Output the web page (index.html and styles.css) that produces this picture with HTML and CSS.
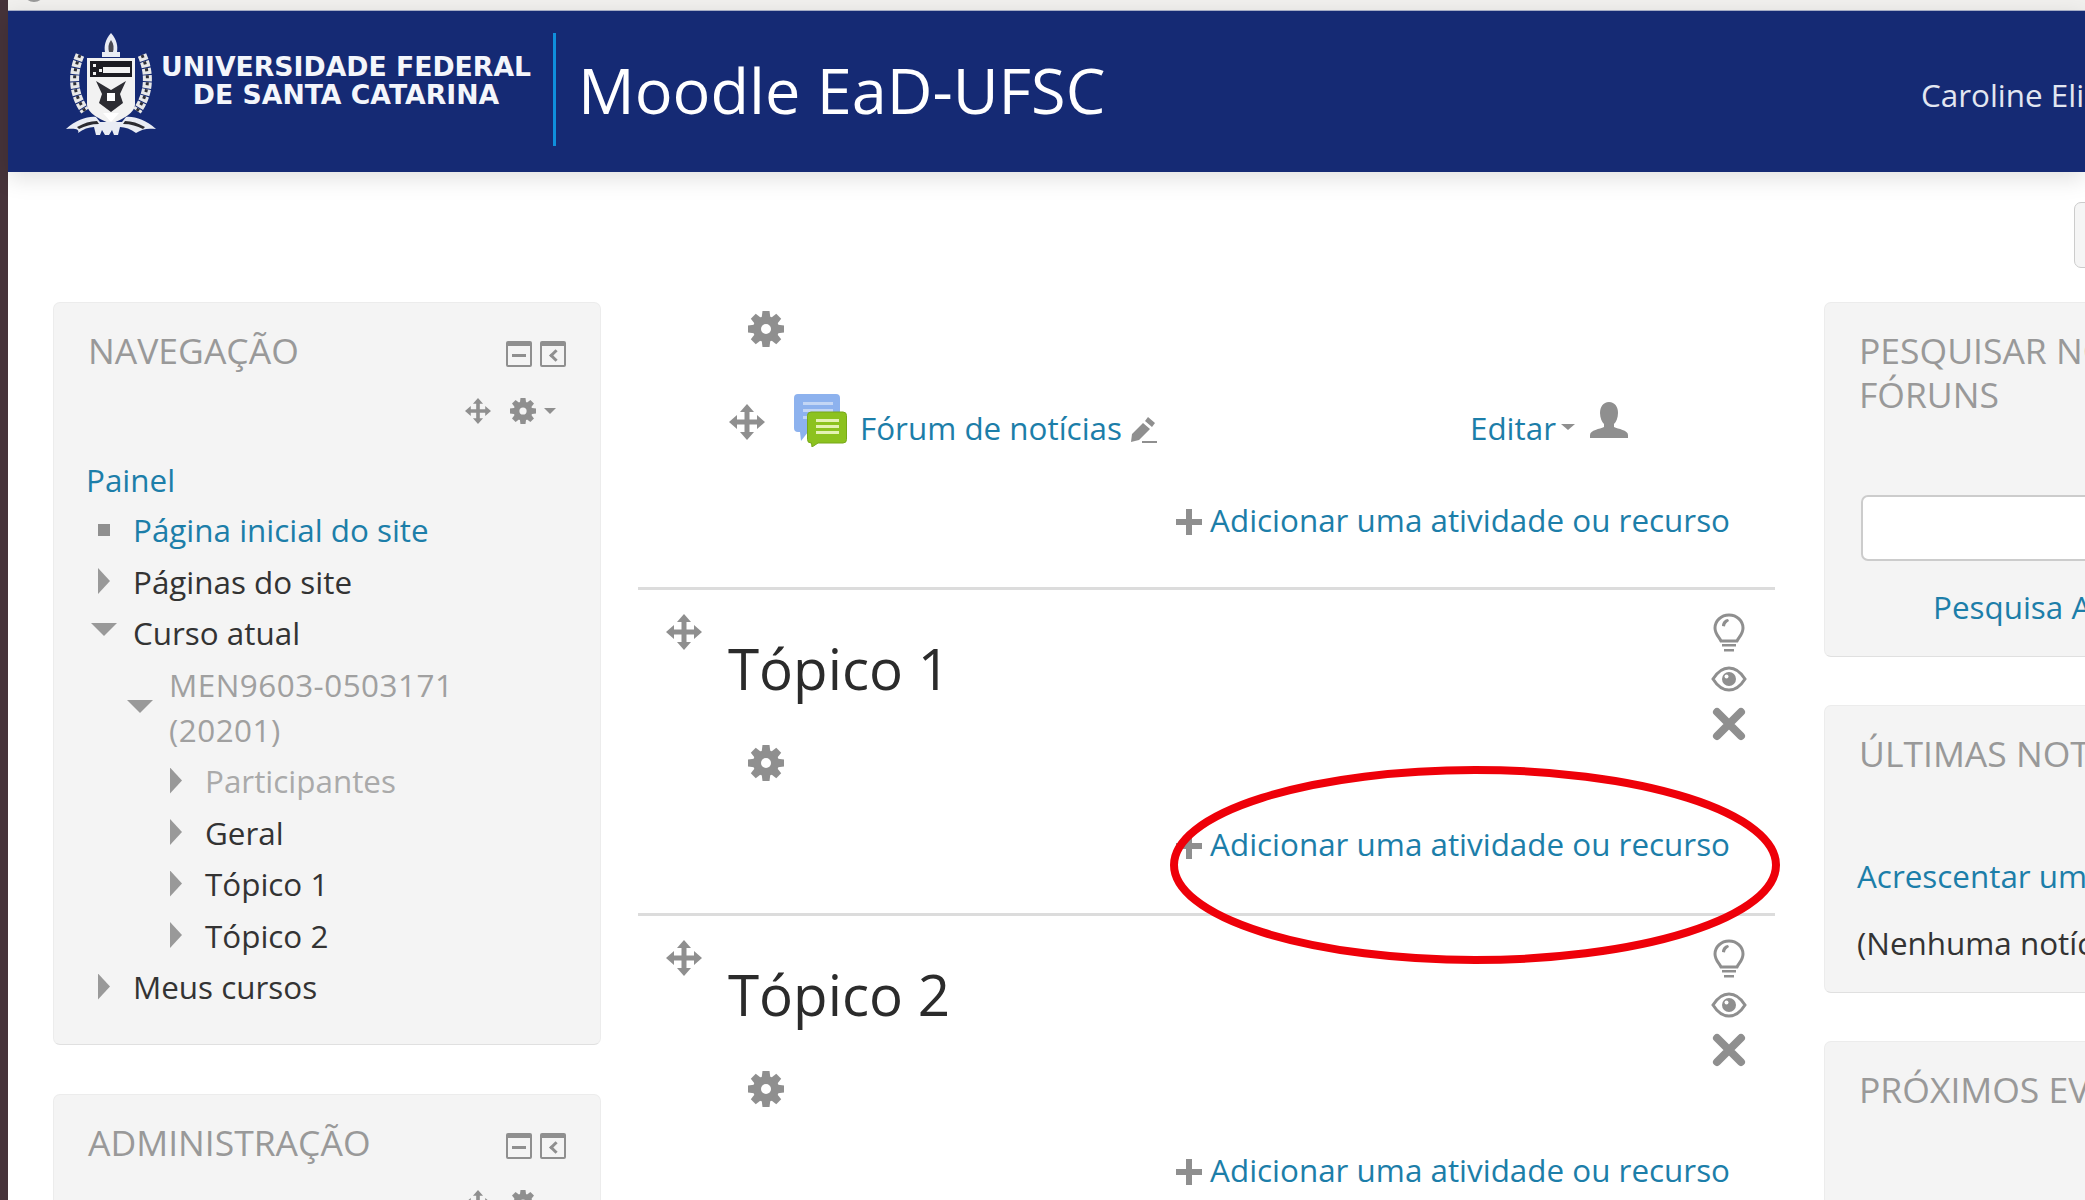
FILE: index.html
```html
<!DOCTYPE html>
<html lang="pt-BR">
<head>
<meta charset="utf-8">
<title>Moodle EaD-UFSC</title>
<link rel="stylesheet" href="styles.css">
</head>
<body>
<svg class="defs" width="0" height="0" aria-hidden="true">
  <symbol id="gear" viewBox="0 0 36 36">
    <g fill="#8f8f8f">
      <circle cx="18" cy="18" r="13"/>
      <path id="tooth" d="M14.500 0h7l1 8h-9z"/>
      <path d="M14.500 0h7l1 8h-9z" transform="rotate(45 18 18)"/>
      <path d="M14.500 0h7l1 8h-9z" transform="rotate(90 18 18)"/>
      <path d="M14.500 0h7l1 8h-9z" transform="rotate(135 18 18)"/>
      <path d="M14.500 0h7l1 8h-9z" transform="rotate(180 18 18)"/>
      <path d="M14.500 0h7l1 8h-9z" transform="rotate(225 18 18)"/>
      <path d="M14.500 0h7l1 8h-9z" transform="rotate(270 18 18)"/>
      <path d="M14.500 0h7l1 8h-9z" transform="rotate(315 18 18)"/>
    </g>
    <circle cx="18" cy="18" r="5" fill="var(--hole, #fff)"/>
  </symbol>
  <symbol id="move" viewBox="0 0 36 36">
    <path fill="#8f8f8f" d="M18 0l7 8h-4.500v7.500H28V11l8 7-8 7v-4.500h-7.500V28H25l-7 8-7-8h4.500v-7.500H8V25l-8-7 8-7v4.500h7.500V8H11z"/>
  </symbol>
  <symbol id="plus" viewBox="0 0 26 26">
    <path fill="#8f8f8f" d="M10 0h6v10h10v6H16v10h-6V16H0v-6h10z"/>
  </symbol>
  <symbol id="bulb" viewBox="0 0 32 40">
    <path fill="none" stroke="#8f8f8f" stroke-width="3" d="M16 2c8 0 14 6 14 13 0 6-4 9-6 13H8C6 24 2 21 2 15 2 8 8 2 16 2z"/>
    <path fill="#8f8f8f" d="M9 31h14v2.500H9zM11 36h10v2.500H11zM9 13c0-4 3-7 6-7l1 2c-2 1-4 3-4 5.500z"/>
  </symbol>
  <symbol id="eye" viewBox="0 0 36 26">
    <path fill="none" stroke="#8f8f8f" stroke-width="3" d="M2 13C7 5 12 2 18 2s11 3 16 11c-5 8-10 11-16 11S7 21 2 13z"/>
    <circle cx="18" cy="13" r="7" fill="#8f8f8f"/>
    <circle cx="15.500" cy="10.500" r="2" fill="#fff"/>
  </symbol>
  <symbol id="close" viewBox="0 0 36 36">
    <path fill="none" stroke="#8f8f8f" stroke-width="8" stroke-linecap="round" d="M6 6l24 24M30 6L6 30"/>
  </symbol>
</svg>

<div class="edge"></div>
<div class="window">
  <div class="browser-strip"><span class="browser-dot"></span></div>
  <header class="site-header">
    <div class="logo">
      <svg class="crest" viewBox="0 0 92 104" aria-hidden="true">
        <path fill="#e9ecf4" d="M46 0c-6 7-7 13-6 19h-3v5h18v-5h-3c1-6 0-12-6-19z"/>
        <path fill="#4a4a52" d="M46 7c-3 4-3 8-2 12h4c1-4 1-8-2-12z"/>
        <path fill="#f2f2f2" d="M22 25h48v46c0 9-12 15-24 20-12-5-24-11-24-20z"/>
        <path fill="#1c1c22" d="M25 28h42v16H25z"/>
        <path fill="#f2f2f2" d="M38 34h27v6H38zM28 31h3v3h-3zM34 36h3v3h-3zM28 39h3v3h-3z"/>
        <path fill="#2d2d33" d="M31 48l15 9 15-9-6 13 3 9-12 9-12-9 3-9z"/>
        <path fill="#fff" d="M42 60h8v8h-8zM38 80h16l-8 9z"/>
        <g fill="none" stroke="#e8e8e8" stroke-width="9" stroke-dasharray="6 1">
          <path d="M15 22c-7 16-9 36 5 56"/>
          <path d="M77 22c7 16 9 36-5 56"/>
        </g>
        <g fill="none" stroke="#2f2f36" stroke-width="3" stroke-dasharray="3 4">
          <path d="M15 22c-7 16-9 36 5 56"/>
          <path d="M77 22c7 16 9 36-5 56"/>
        </g>
        <path fill="#e9ecf4" d="M1 96c10-9 22-13 30-12l4 5h22l4-5c8-1 20 3 30 12-9-1-14 0-20 4-5-4-11-6-16-6l-2 8h-4l-2-5-3 5h-4l-3-5-2 5h-4l-2-8c-5 0-11 2-16 6C15 96 10 95 1 96z"/>
        <path fill="#2b2b31" d="M12 94c7-4 13-6 20-6l2 3c-8 0-14 2-20 5zM80 94c-7-4-13-6-20-6l-2 3c8 0 14 2 20 5z"/>
      </svg>
      <div class="logo-text"><span>UNIVERSIDADE FEDERAL</span><span>DE SANTA CATARINA</span></div>
    </div>
    <h1 class="site-name">Moodle EaD-UFSC</h1>
    <div class="user-name">Caroline Elisa da Silva</div>
  </header>

  <div class="page-tools"><button class="page-button" type="button"></button></div>

  <div class="columns">
    <aside class="side-left">
      <section class="block">
        <div class="block-head">
          <h2 class="block-title">NAVEGAÇÃO</h2>
          <div class="win-icons">
            <span class="win-icon"><i class="win-minus"></i></span>
            <span class="win-icon"><i class="win-chev"></i></span>
          </div>
        </div>
        <div class="block-tools">
          <svg class="tool-icon"><use href="#move"/></svg>
          <svg class="tool-icon tool-gear"><use href="#gear"/></svg>
          <i class="caret"></i>
        </div>
        <a class="link tree-root" href="#">Painel</a>
        <ul class="tree">
          <li><div class="tree-row"><i class="bullet"></i><a class="link" href="#">Página inicial do site</a></div></li>
          <li><div class="tree-row"><i class="arrow-right"></i><span>Páginas do site</span></div></li>
          <li>
            <div class="tree-row"><i class="arrow-down arrow-top"></i><span>Curso atual</span></div>
            <ul class="tree tree-sub">
              <li>
                <div class="tree-row"><i class="arrow-down"></i><span class="muted course-name">MEN9603-0503171 (20201)</span></div>
                <ul class="tree tree-sub">
                  <li><div class="tree-row"><i class="arrow-right"></i><span class="muted-light">Participantes</span></div></li>
                  <li><div class="tree-row"><i class="arrow-right"></i><span>Geral</span></div></li>
                  <li><div class="tree-row"><i class="arrow-right"></i><span>Tópico 1</span></div></li>
                  <li><div class="tree-row"><i class="arrow-right"></i><span>Tópico 2</span></div></li>
                </ul>
              </li>
            </ul>
          </li>
          <li><div class="tree-row"><i class="arrow-right"></i><span>Meus cursos</span></div></li>
        </ul>
      </section>
      <section class="block">
        <div class="block-head">
          <h2 class="block-title">ADMINISTRAÇÃO</h2>
          <div class="win-icons">
            <span class="win-icon"><i class="win-minus"></i></span>
            <span class="win-icon"><i class="win-chev"></i></span>
          </div>
        </div>
        <div class="block-tools">
          <svg class="tool-icon"><use href="#move"/></svg>
          <svg class="tool-icon tool-gear"><use href="#gear"/></svg>
          <i class="caret"></i>
        </div>
      </section>
    </aside>

    <main class="course">
      <section class="topic topic-intro">
        <div class="intro-gear"><svg class="gear-icon"><use href="#gear"/></svg></div>
        <div class="activity">
          <svg class="move-icon"><use href="#move"/></svg>
          <svg class="forum-icon" viewBox="0 0 53 53" aria-hidden="true">
            <path fill="#8db2ee" d="M4 0h38a4 4 0 0 1 4 4v30a4 4 0 0 1-4 4H14l-7 9-1-9H4a4 4 0 0 1-4-4V4a4 4 0 0 1 4-4z"/>
            <path fill="#c3d6f5" d="M9 8h30v3H9zM9 15h30v3H9zM9 22h12v3H9z"/>
            <path fill="#8cc21f" stroke="#77a818" stroke-width="1" d="M17 18h32a3.500 3.500 0 0 1 3.500 3.500v24a3.500 3.500 0 0 1-3.500 3.500H24l-6 4-.500-4H17a3.500 3.500 0 0 1-3.500-3.500v-24A3.500 3.500 0 0 1 17 18z"/>
            <path fill="#e4f2b4" d="M22 25h23v3H22zM22 31h23v3H22zM22 37h23v3H22z"/>
          </svg>
          <a class="link forum-link" href="#">Fórum de notícias</a>
          <svg class="pencil-icon" viewBox="0 0 28 28" aria-hidden="true">
            <path fill="#8f8f8f" d="M19 1l7 6-3 4-7-6zM14 7l7 6-11 11-8 2 1-8z"/>
            <path fill="#8f8f8f" d="M13 25h15v2H13z"/>
          </svg>
          <div class="activity-actions">
            <a class="link edit-link" href="#">Editar</a>
            <i class="caret caret-dark"></i>
            <svg class="person-icon" viewBox="0 0 38 36" aria-hidden="true">
              <path fill="#8f8f8f" d="M19 0c6 0 9 5 9 11 0 5-2 9-4 11v3c4 2 14 3 14 8v3H0v-3c0-5 10-6 14-8v-3c-2-2-4-6-4-11 0-6 3-11 9-11z"/>
            </svg>
          </div>
        </div>
        <div class="add-row">
          <svg class="plus-icon"><use href="#plus"/></svg>
          <a class="link" href="#">Adicionar uma atividade ou recurso</a>
        </div>
      </section>

      <section class="topic">
        <div class="topic-head">
          <svg class="move-icon"><use href="#move"/></svg>
          <div class="topic-body">
            <h3 class="topic-title">Tópico 1</h3>
            <svg class="gear-icon"><use href="#gear"/></svg>
          </div>
          <div class="topic-actions">
            <svg class="bulb-icon"><use href="#bulb"/></svg>
            <svg class="eye-icon"><use href="#eye"/></svg>
            <svg class="close-icon"><use href="#close"/></svg>
          </div>
        </div>
        <div class="add-row">
          <svg class="plus-icon"><use href="#plus"/></svg>
          <a class="link" href="#">Adicionar uma atividade ou recurso</a>
        </div>
      </section>

      <section class="topic">
        <div class="topic-head">
          <svg class="move-icon"><use href="#move"/></svg>
          <div class="topic-body">
            <h3 class="topic-title">Tópico 2</h3>
            <svg class="gear-icon"><use href="#gear"/></svg>
          </div>
          <div class="topic-actions">
            <svg class="bulb-icon"><use href="#bulb"/></svg>
            <svg class="eye-icon"><use href="#eye"/></svg>
            <svg class="close-icon"><use href="#close"/></svg>
          </div>
        </div>
        <div class="add-row">
          <svg class="plus-icon"><use href="#plus"/></svg>
          <a class="link" href="#">Adicionar uma atividade ou recurso</a>
        </div>
      </section>
    </main>

    <aside class="side-right">
      <section class="block block-search">
        <h2 class="block-title wrap-title">PESQUISAR NOS FÓRUNS</h2>
        <input class="search-input" type="text" aria-label="Pesquisar">
        <a class="link search-adv" href="#">Pesquisa Avançada</a>
      </section>
      <section class="block block-news">
        <h2 class="block-title">ÚLTIMAS NOTÍCIAS</h2>
        <a class="link news-add" href="#">Acrescentar um novo tópico...</a>
        <p class="news-empty">(Nenhuma notícia publicada)</p>
      </section>
      <section class="block block-events">
        <h2 class="block-title">PRÓXIMOS EVENTOS</h2>
      </section>
    </aside>
  </div>
</div>

<svg class="annotation" viewBox="0 0 620 204" aria-hidden="true">
  <ellipse cx="305" cy="102" rx="301" ry="95" fill="none" stroke="#ee0009" stroke-width="8"/>
</svg>
</body>
</html>
```
FILE: styles.css
```css
* { box-sizing: border-box; }

html, body {
  margin: 0;
  height: 1200px;
  overflow: hidden;
}

body {
  display: flex;
  position: relative;
  background: #fff;
  color: #333;
  font-family: "Open Sans", "Noto Sans", sans-serif;
  font-size: 31.4px;
  line-height: 45px;
}

.defs { position: absolute; }

.edge {
  flex: 0 0 8px;
  background: #46333a;
}

.window {
  flex: 0 0 2077px;
  width: 2077px;
  display: flex;
  flex-direction: column;
}

.browser-strip {
  flex: none;
  height: 11px;
  background: #f1f0ee;
  overflow: hidden;
  border-bottom: 1px solid #aab2cc;
  padding-left: 15px;
}

.browser-dot {
  display: block;
  width: 22px;
  height: 22px;
  margin-top: -20px;
  border: 2px solid #9a9a9a;
  border-radius: 50%;
  background: #fff;
}

.site-header {
  height: 161px;
  flex: none;
  display: flex;
  align-items: center;
  background: #152a74;
  box-shadow: 0 6px 22px rgba(0, 0, 0, .13);
  padding-left: 57px;
  color: #fff;
  position: relative;
}

.logo {
  display: flex;
  align-items: flex-start;
  height: 113px;
  width: 491px;
  margin-top: -5px;
  border-right: 3px solid #0f8fdc;
}

.crest {
  width: 92px;
  height: 104px;
  flex: none;
}

.logo-text {
  display: flex;
  flex-direction: column;
  align-items: center;
  margin: 20px 0 0 4px;
  font-family: "DejaVu Sans", sans-serif;
  font-weight: 700;
  font-size: 26.7px;
  line-height: 28px;
  white-space: nowrap;
  color: #f4f6fb;
}

.site-name {
  margin: -3px 0 0 22px;
  font-weight: 400;
  font-size: 63px;
  line-height: 80px;
  white-space: nowrap;
  color: #fff;
}

.user-name {
  margin-left: auto;
  width: 164px;
  padding-top: 5px;
  white-space: nowrap;
  color: #e2e6f1;
}

.page-tools {
  display: flex;
  justify-content: flex-end;
  padding-top: 30px;
  height: 130px;
  flex: none;
}

.page-button {
  width: 100px;
  height: 66px;
  margin-right: -89px;
  flex: none;
  border: 1px solid #ccc;
  border-radius: 7px;
  background: #f5f5f5;
}

.columns {
  display: flex;
  align-items: flex-start;
  padding-left: 45px;
}

.side-left {
  flex: 0 0 548px;
  display: flex;
  flex-direction: column;
  gap: 49px;
}

.course {
  flex: 0 0 1137px;
  margin-left: 37px;
}

.side-right {
  flex: 0 0 548px;
  margin-left: 49px;
  display: flex;
  flex-direction: column;
  gap: 48px;
}

.block {
  background: #f4f4f4;
  border: 1px solid #ececec;
  border-bottom-color: #e0e0e0;
  border-radius: 7px;
  padding: 25px 34px 28px 32px;
}

.block-head {
  display: flex;
  justify-content: space-between;
  align-items: center;
}

.block-title {
  margin: 0 0 0 2px;
  font-weight: 400;
  font-size: 35.5px;
  line-height: 44px;
  color: #999;
  white-space: nowrap;
}

.win-icons {
  display: flex;
  gap: 8px;
  padding-top: 8px;
}

.win-icon {
  width: 26px;
  height: 26px;
  border: 2px solid #8f8f8f;
  border-top-width: 5px;
  border-radius: 2px;
  display: flex;
  align-items: center;
  justify-content: center;
}

.win-minus {
  width: 14px;
  height: 3px;
  background: #8f8f8f;
}

.win-chev {
  width: 9px;
  height: 9px;
  margin-left: 4px;
  border-left: 3px solid #8f8f8f;
  border-bottom: 3px solid #8f8f8f;
  transform: rotate(45deg);
}

.block-tools {
  display: flex;
  justify-content: flex-end;
  align-items: center;
  height: 28px;
  margin-top: 25px;
  margin-bottom: 32px;
  padding-right: 10px;
}

.tool-icon {
  width: 26px;
  height: 26px;
  --hole: #f4f4f4;
}

.tool-gear { margin-left: 19px; }

.caret {
  width: 0;
  height: 0;
  margin-left: 8px;
  border-left: 6px solid transparent;
  border-right: 6px solid transparent;
  border-top: 6px solid #8f8f8f;
}

.link {
  color: #1c7ea9;
  text-decoration: none;
}

.tree-root {
  display: block;
  margin-bottom: 5px;
}

.tree {
  list-style: none;
  margin: 0;
  padding: 0 0 0 9px;
}

.tree li { margin: 0; }

.tree-row {
  display: flex;
  align-items: center;
  gap: 20px;
  margin-bottom: 6.500px;
}

.tree-sub { padding-left: 36px; }

.bullet {
  flex: none;
  width: 18px;
  height: 12px;
  background: linear-gradient(#8f8f8f, #8f8f8f) center / 12px 12px no-repeat;
}

.arrow-right {
  flex: none;
  width: 18px;
  height: 26px;
  clip-path: polygon(3px 0, 15px 13px, 3px 26px);
  background: #999;
}

.arrow-down {
  flex: none;
  width: 26px;
  height: 13px;
  margin: 0 -4px;
  clip-path: polygon(0 0, 100% 0, 50% 100%);
  background: #999;
}

.arrow-top { margin-top: -6px; }

.muted { color: #a0a0a0; }
.muted-light { color: #aaa; }

.course-name {
  max-width: 320px;
  letter-spacing: .5px;
}

.topic {
  border-bottom: 3px solid #dcdcdc;
}

.topic:last-child { border-bottom: 0; }

.intro-gear { padding: 9px 0 0 110px; }

.gear-icon {
  display: block;
  width: 36px;
  height: 36px;
}

.activity {
  display: flex;
  align-items: center;
  height: 50px;
  margin-top: 51px;
  padding: 0 147px 0 91px;
}

.move-icon {
  flex: none;
  width: 36px;
  height: 36px;
}

.activity > .move-icon { margin-top: -2px; }

.forum-icon {
  flex: none;
  width: 53px;
  height: 53px;
  margin: -5px 0 0 29px;
}

.forum-link {
  margin: 8px 0 0 13px;
  white-space: nowrap;
}

.pencil-icon {
  flex: none;
  width: 28px;
  height: 28px;
  margin: 14px 0 0 7px;
}

.activity-actions {
  margin-left: auto;
  display: flex;
  align-items: center;
}

.edit-link { margin-top: 8px; }

.caret-dark {
  margin: 8px 0 0 5px;
  border-left-width: 7px;
  border-right-width: 7px;
}

.person-icon {
  width: 38px;
  height: 36px;
  margin: -6px 0 0 15px;
}

.add-row {
  display: flex;
  justify-content: flex-end;
  align-items: center;
  gap: 8px;
  margin-top: 49px;
  padding: 0 45px 45px 0;
}

.add-row .link { white-space: nowrap; }

.plus-icon {
  flex: none;
  width: 26px;
  height: 26px;
  margin-top: 5px;
}

.topic-head {
  display: flex;
  align-items: flex-start;
  padding: 24px 27px 0 28px;
}

.topic-head + .add-row {
  margin-top: 40px;
  padding-bottom: 47px;
}

.topic-body {
  flex: 1;
  margin-left: 26px;
  padding-top: 17px;
}

.topic-title {
  margin: 0;
  font-weight: 400;
  font-size: 56.5px;
  line-height: 76px;
  color: #2b2b2b;
}

.topic-body .gear-icon { margin: 38px 0 0 20px; }

.topic-actions {
  width: 38px;
  display: flex;
  flex-direction: column;
  align-items: center;
  margin-top: -1px;
}

.bulb-icon {
  width: 32px;
  height: 40px;
}

.eye-icon {
  width: 36px;
  height: 26px;
  margin-top: 13px;
}

.close-icon {
  width: 36px;
  height: 36px;
  margin-top: 14px;
}

.side-right .block {
  width: 548px;
  padding-left: 34px;
}

.side-right .block-title { margin-left: 0; }

.wrap-title {
  white-space: normal;
  max-width: 320px;
}

.block-search { height: 355px; }

.search-input {
  display: block;
  width: 420px;
  height: 66px;
  margin: 79px 0 0 2px;
  background: #fff;
  border: 2px solid #ccc;
  border-radius: 7px;
}

.search-adv {
  display: block;
  margin: 23px 0 0 74px;
  white-space: nowrap;
}

.block-news { height: 288px; }

.news-add {
  display: block;
  margin: 78px 0 0 -2px;
  white-space: nowrap;
}

.news-empty {
  margin: 22px 0 0 -2px;
  white-space: nowrap;
}

.block-events { height: 300px; }

.annotation {
  position: absolute;
  left: 1170px;
  top: 763px;
  width: 620px;
  height: 204px;
}
```
